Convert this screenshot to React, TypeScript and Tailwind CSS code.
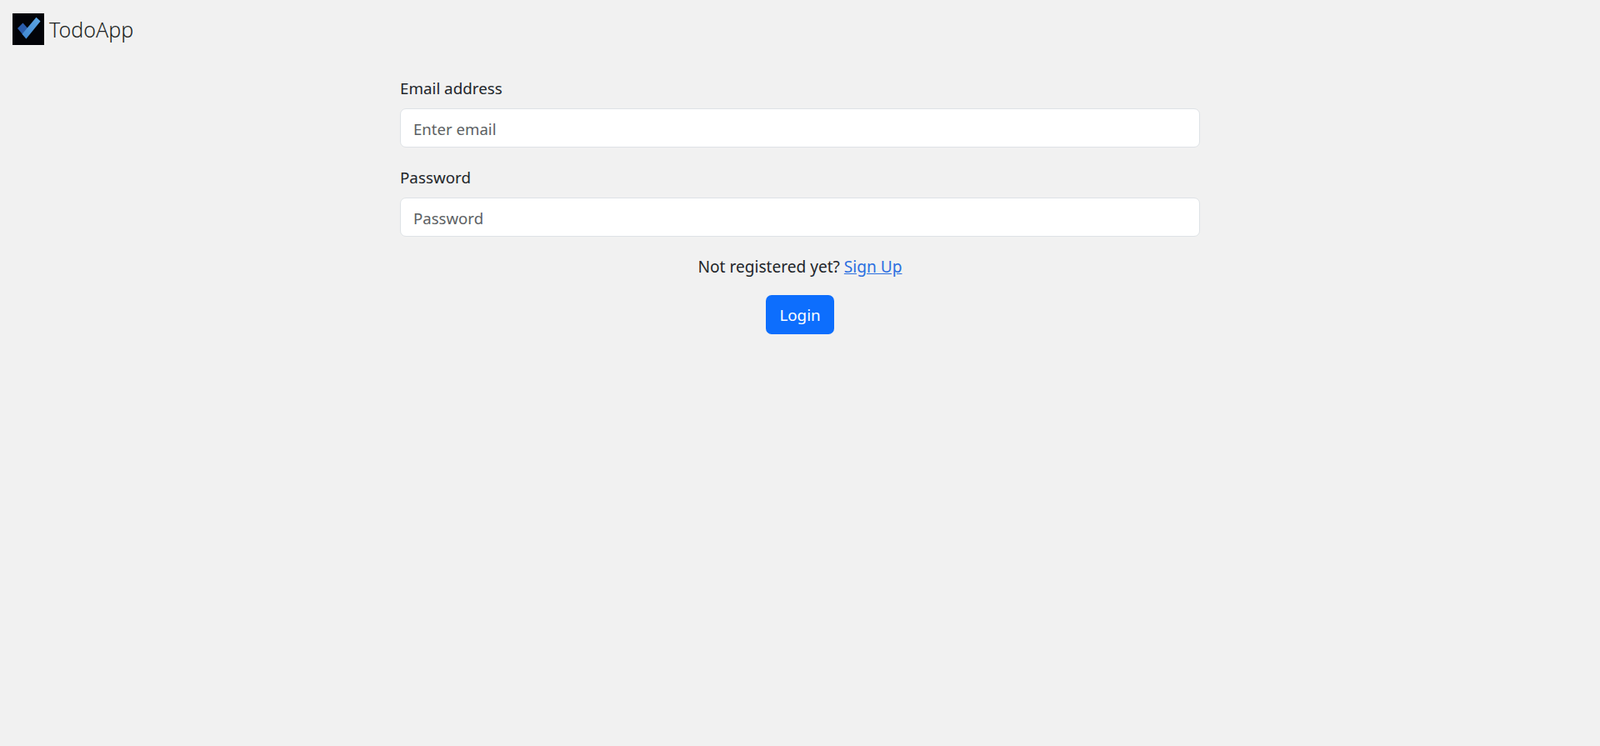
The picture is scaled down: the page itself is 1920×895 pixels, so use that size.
export default function App() {
  return (
    <div className="min-h-[895px] bg-[#f1f1f1] font-['Noto_Sans','Open_Sans',sans-serif] text-[18.8px] leading-[1.5] text-[#212529]">
      <nav className="flex h-[71px] items-center pb-[2px] pl-[15px]">
        <a href="#" className="flex items-center text-[25px] font-light text-[#1a1e21]">
          <svg width="38" height="38" viewBox="0 0 38 38" className="mr-[6px]">
            <rect width="38" height="38" fill="#020308" />
            <defs>
              <linearGradient id="chk" x1="0" y1="1" x2="1" y2="0">
                <stop offset="0" stopColor="#3f86d0" />
                <stop offset="1" stopColor="#5fa8e6" />
              </linearGradient>
            </defs>
            <path d="M6 18 L12.5 11.5 L21 21 L16.5 30.5 Z" fill="#2a5cab" />
            <path d="M11.5 25 L28.5 4.7 L33.5 9.5 L16.5 30.5 Z" fill="url(#chk)" />
          </svg>
          <span className="pt-[2px]">TodoApp</span>
        </a>
      </nav>
      <form className="mx-auto w-[960px] pt-[21px]">
        <div className="mb-[22px]">
          <label className="mb-[10px] block">Email address</label>
          <input
            type="email"
            placeholder="Enter email"
            className="block h-[47px] w-full rounded-[7px] border border-[#dee2e6] bg-white px-[15px] pt-[2px] text-[18.6px] placeholder:text-[#5c5f63] outline-none"
          />
        </div>
        <div className="mb-[22px]">
          <label className="mb-[10px] block">Password</label>
          <input
            type="password"
            placeholder="Password"
            className="block h-[47px] w-full rounded-[7px] border border-[#dee2e6] bg-white px-[15px] pt-[2px] text-[18.6px] placeholder:text-[#5c5f63] outline-none"
          />
        </div>
        <p className="mb-[19px] text-center text-[19.1px]">
          Not registered yet?{" "}
          <a href="#" className="text-[#2a6ee0] underline">
            Sign Up
          </a>
        </p>
        <div className="flex justify-center">
          <button
            type="button"
            className="h-[47px] w-[82px] rounded-[7px] bg-[#0d6efd] pt-[2px] text-white"
          >
            Login
          </button>
        </div>
      </form>
    </div>
  );
}
